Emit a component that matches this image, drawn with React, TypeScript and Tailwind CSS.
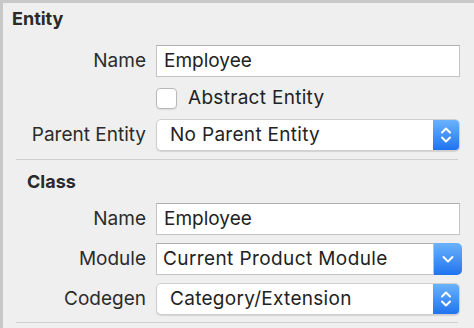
import React from "react";

const font = { fontFamily: "Inter, 'Open Sans', 'Liberation Sans', sans-serif" };

function UpDown() {
  return (
    <svg width="12" height="18" viewBox="0 0 12 18" fill="none">
      <path d="M2 6.5 L6 2.5 L10 6.5" stroke="white" strokeWidth="2" strokeLinecap="round" strokeLinejoin="round" />
      <path d="M2 11.5 L6 15.5 L10 11.5" stroke="white" strokeWidth="2" strokeLinecap="round" strokeLinejoin="round" />
    </svg>
  );
}

function Down() {
  return (
    <svg width="14" height="10" viewBox="0 0 14 10" fill="none">
      <path d="M2.5 3 L7 7.5 L11.5 3" stroke="white" strokeWidth="2" strokeLinecap="round" strokeLinejoin="round" />
    </svg>
  );
}

function Label({ children }: { children: React.ReactNode }) {
  return (
    <div className="w-[143px] shrink-0 text-right text-[19px] leading-[24px] text-[#2b2b2b]">{children}</div>
  );
}

function TextField({ value }: { value: string }) {
  return (
    <div className="w-[304px] h-[32px] bg-white border border-[#c4c4c4] border-t-[#b0b0b0] flex items-center pl-[7px] text-[19px] text-[#222]">
      {value}
    </div>
  );
}

function Popup({ value }: { value: string }) {
  return (
    <div className="w-[304px] h-[32px] bg-white rounded-[5px] border border-[#cfcfcf] shadow-[0_1px_1px_rgba(0,0,0,0.12)] flex items-stretch overflow-hidden">
      <div className="flex-1 flex items-center pl-[13px] text-[19px] tracking-[0.3px] text-[#222]">{value}</div>
      <div className="w-[26px] bg-gradient-to-b from-[#6ab2fb] to-[#1f73ef] flex items-center justify-center">
        <UpDown />
      </div>
    </div>
  );
}

function Combo({ value }: { value: string }) {
  return (
    <div className="w-[306px] h-[32px] flex items-stretch">
      <div className="w-[278px] bg-white border border-[#c4c4c4] border-t-[#b0b0b0] flex items-center pl-[6px] text-[19px] tracking-[0.4px] text-[#222]">
        {value}
      </div>
      <div className="w-[28px] rounded-r-[5px] bg-gradient-to-b from-[#6ab2fb] to-[#1f73ef] flex items-center justify-center">
        <Down />
      </div>
    </div>
  );
}

function Row({ label, children, className = "" }: { label?: string; children: React.ReactNode; className?: string }) {
  return (
    <div className={"flex items-center gap-[10px] " + className}>
      <Label>{label}</Label>
      {children}
    </div>
  );
}

export default function App() {
  return (
    <div
      style={font}
      className="w-[474px] h-[328px] overflow-hidden bg-[#efefef] border-t-[3px] border-l-[3px] border-[#c8c8c8] flex flex-col"
    >
      <div className="mt-[5px] ml-[9px] text-[18px] leading-[22px] font-bold text-[#2a2a2a]">Entity</div>
      <Row label="Name" className="mt-[15px]">
        <TextField value="Employee" />
      </Row>
      <Row className="mt-[10px] h-[22px]">
        <div className="flex items-center gap-[11px]">
          <div className="w-[21px] h-[21px] rounded-[4px] bg-white border border-[#b8b8b8] shadow-[0_1px_1px_rgba(0,0,0,0.08)]" />
          <span className="text-[19px] leading-[24px] tracking-[0.3px] text-[#222]">Abstract Entity</span>
        </div>
      </Row>
      <Row label="Parent Entity" className="mt-[10px]">
        <Popup value="No Parent Entity" />
      </Row>
      <div className="mt-[8px] ml-[13px] w-[442px] h-px bg-[#cfcfcf]" />
      <div className="mt-[11px] ml-[24px] text-[18px] leading-[22px] font-bold text-[#2a2a2a]">Class</div>
      <Row label="Name" className="mt-[10px]">
        <TextField value="Employee" />
      </Row>
      <Row label="Module" className="mt-[8px]">
        <Combo value="Current Product Module" />
      </Row>
      <Row label="Codegen" className="mt-[8px]">
        <Popup value="Category/Extension" />
      </Row>
      <div className="mt-[7px] ml-[13px] w-[442px] h-px bg-[#cfcfcf]" />
    </div>
  );
}
